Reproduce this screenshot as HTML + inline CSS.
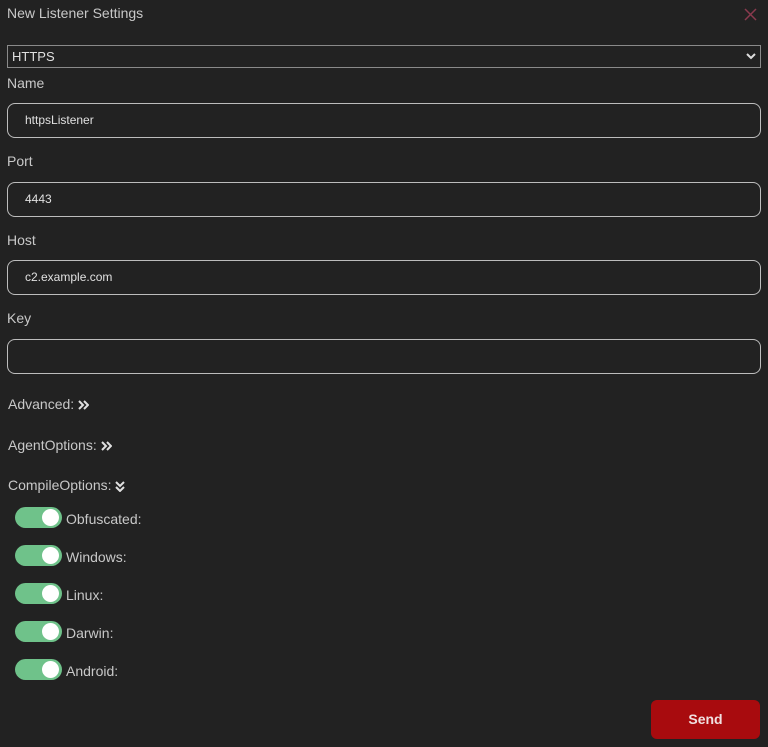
<!DOCTYPE html>
<html><head><style>
body{margin:0;width:768px;height:747px;background:#222;font-family:"Liberation Sans",sans-serif;color:#cfcfcf;position:relative;overflow:hidden}
.a{position:absolute}
.lbl{font-size:14px;color:#c8c8c8}
.inp{position:absolute;left:7px;width:752px;height:33px;border:1.5px solid #bdbdbd;border-radius:8px;box-sizing:content-box;font-size:12px;color:#e0e0e0;line-height:33px;text-indent:17px}
.tg{position:absolute;left:15px;width:47px;height:21px;border-radius:11px;background:#6fc28a}
.tg::after{content:"";position:absolute;right:3px;top:2px;width:17px;height:17px;border-radius:50%;background:#fff}
.tl{position:absolute;left:66px;font-size:14px;color:#c8c8c8}
svg.c{display:inline-block;vertical-align:middle}
</style></head><body>
<div class="a lbl" style="left:7px;top:5px">New Listener Settings</div>
<svg class="a" style="left:744px;top:8px" width="13" height="13"><path d="M1 1L12 12M12 1L1 12" stroke="#8a3a4e" stroke-width="1.5"/></svg>
<div class="a" style="left:7px;top:45px;width:752px;height:21px;border:1px solid #8a8a8a;font-size:13px;color:#e0e0e0;line-height:21px;text-indent:4px">HTTPS</div>
<svg class="a" style="left:746px;top:52px" width="10" height="8"><path d="M1 2L5 6L9 2" stroke="#ddd" stroke-width="2" fill="none"/></svg>
<div class="a lbl" style="left:7px;top:75px">Name</div>
<div class="inp" style="top:103px">httpsListener</div>
<div class="a lbl" style="left:7px;top:153px">Port</div>
<div class="inp" style="top:182px">4443</div>
<div class="a lbl" style="left:7px;top:232px">Host</div>
<div class="inp" style="top:260px">c2.example.com</div>
<div class="a lbl" style="left:7px;top:310px">Key</div>
<div class="inp" style="top:339px"></div>
<div class="a lbl" style="left:8px;top:396px">Advanced: <svg class="c" width="11" height="10"><path d="M1 1L5 5L1 9M6 1L10 5L6 9" stroke="#e0e0e0" stroke-width="2" fill="none"/></svg></div>
<div class="a lbl" style="left:8px;top:437px">AgentOptions: <svg class="c" width="11" height="10"><path d="M1 1L5 5L1 9M6 1L10 5L6 9" stroke="#e0e0e0" stroke-width="2" fill="none"/></svg></div>
<div class="a lbl" style="left:8px;top:477px">CompileOptions:<svg class="c" style="margin-left:3px" width="10" height="11"><path d="M1 1L5 5L9 1M1 6L5 10L9 6" stroke="#e0e0e0" stroke-width="2" fill="none"/></svg></div>
<div class="tg" style="top:507px"></div><div class="tl" style="top:511px">Obfuscated:</div>
<div class="tg" style="top:545px"></div><div class="tl" style="top:549px">Windows:</div>
<div class="tg" style="top:583px"></div><div class="tl" style="top:587px">Linux:</div>
<div class="tg" style="top:621px"></div><div class="tl" style="top:625px">Darwin:</div>
<div class="tg" style="top:659px"></div><div class="tl" style="top:663px">Android:</div>
<div class="a" style="left:651px;top:700px;width:109px;height:39px;border-radius:6px;background:#a80b0e;color:#f0e0e0;font-weight:bold;font-size:14px;text-align:center;line-height:39px">Send</div>
</body></html>
